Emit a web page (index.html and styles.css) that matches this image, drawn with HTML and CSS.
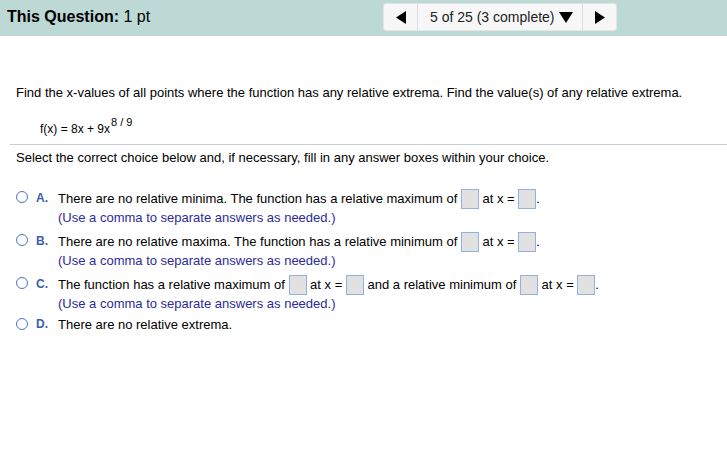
FILE: index.html
```html
<!DOCTYPE html>
<html>
<head>
<meta charset="utf-8">
<link rel="stylesheet" href="styles.css">
</head>
<body>
<div class="topbar">
  <div class="title"><b>This Question:</b> 1 pt</div>
  <div class="nav">
    <div class="navbtn"><svg width="10" height="13" viewBox="0 0 10 13"><path d="M10 0 L0 6.5 L10 13 Z" fill="#000"/></svg></div>
    <div class="navmid">5 of 25 (3 complete)<svg class="caret" width="14" height="11" viewBox="0 0 14 11"><path d="M0 0 L14 0 L7 11 Z" fill="#000"/></svg></div>
    <div class="navbtn"><svg width="10" height="13" viewBox="0 0 10 13"><path d="M0 0 L10 6.5 L0 13 Z" fill="#000"/></svg></div>
  </div>
</div>
<div class="content">
  <p class="q">Find the x-values of all points where the function has any relative extrema. Find the value(s) of any relative extrema.</p>
  <p class="fx">f(x) = 8x + 9x<span class="sup">8 / 9</span></p>
  <div class="sep"></div>
  <p class="instr">Select the correct choice below and, if necessary, fill in any answer boxes within your choice.</p>
  <div class="choices">
    <div class="choice">
      <span class="radio"></span><span class="letter">A.</span>
      <div class="ctext">
        <div class="line">There are no relative minima. The function has a relative maximum of <span class="box"></span> at x = <span class="box"></span>.</div>
        <div class="hint">(Use a comma to separate answers as needed.)</div>
      </div>
    </div>
    <div class="choice">
      <span class="radio"></span><span class="letter">B.</span>
      <div class="ctext">
        <div class="line">There are no relative maxima. The function has a relative minimum of <span class="box"></span> at x = <span class="box"></span>.</div>
        <div class="hint">(Use a comma to separate answers as needed.)</div>
      </div>
    </div>
    <div class="choice">
      <span class="radio"></span><span class="letter">C.</span>
      <div class="ctext">
        <div class="line">The function has a relative maximum of <span class="box"></span> at x = <span class="box"></span> and a relative minimum of <span class="box"></span> at x = <span class="box"></span>.</div>
        <div class="hint">(Use a comma to separate answers as needed.)</div>
      </div>
    </div>
    <div class="choice plain">
      <span class="radio"></span><span class="letter">D.</span>
      <div class="ctext">
        <div class="line">There are no relative extrema.</div>
      </div>
    </div>
  </div>
</div>
</body>
</html>
```

FILE: styles.css
```css
html, body { margin: 0; padding: 0; background: #fff; }
body { font-family: "Liberation Sans", Arial, sans-serif; color: #000; font-size: 13px; }
.topbar {
  height: 36px;
  background: #bcd9d5;
  display: flex;
  align-items: flex-start;
}
.title { font-size: 16px; line-height: 18px; padding: 8px 0 0 7px; width: 376px; }
.nav {
  margin-top: 3px;
  height: 28px;
  display: flex;
  background: #f7f7f7;
  border-radius: 3px;
  box-sizing: border-box;
  border: 1px solid #e4e4e4;
}
.navbtn { width: 33px; display: flex; align-items: center; justify-content: center; }
.navmid {
  width: 166px;
  border-left: 1px solid #dcdcdc;
  border-right: 1px solid #dcdcdc;
  display: flex; align-items: center;
  padding-left: 12px; box-sizing: border-box;
  font-size: 14px; color: #222;
}
.caret { margin-left: 4px; }
.content { padding: 0 0 0 16px; }
.q { margin: 49px 0 0 0; line-height: 16px; }
.fx { margin: 20px 0 0 24px; line-height: 16px; font-size: 12px; }
.sup { font-size: 11px; position: relative; top: -7px; margin-left: 1px; }
.sep { height: 1px; background: #c8cdd6; margin: 7px 0 0 -6px; }
.instr { margin: 5px 0 0 0; line-height: 16px; }
.choices { margin-top: 22px; }
.choice { display: flex; align-items: flex-start; margin-bottom: 5px; }
.radio {
  width: 10px; height: 10px; border: 1.5px solid #4a72c8; border-radius: 50%;
  margin: 3px 0 0 0; flex: none;
}
.letter { color: #3a5fb0; font-weight: bold; font-size: 12px; line-height: 14px; width: 22px; margin: 3px 0 0 8px; flex: none; }
.line { line-height: 22px; }
.plain .line { line-height: 14px; margin-top: 1px; }
.plain .radio { margin-top: 1px; }
.plain .letter { margin-top: 0; }
.hint { color: #2b2b9a; line-height: 16px; }
.box {
  display: inline-block; width: 16px; height: 18px; background: #e1e1e1;
  border: 1px solid #94b1e2; vertical-align: middle; margin: -2px 0 0 0;
}
```
